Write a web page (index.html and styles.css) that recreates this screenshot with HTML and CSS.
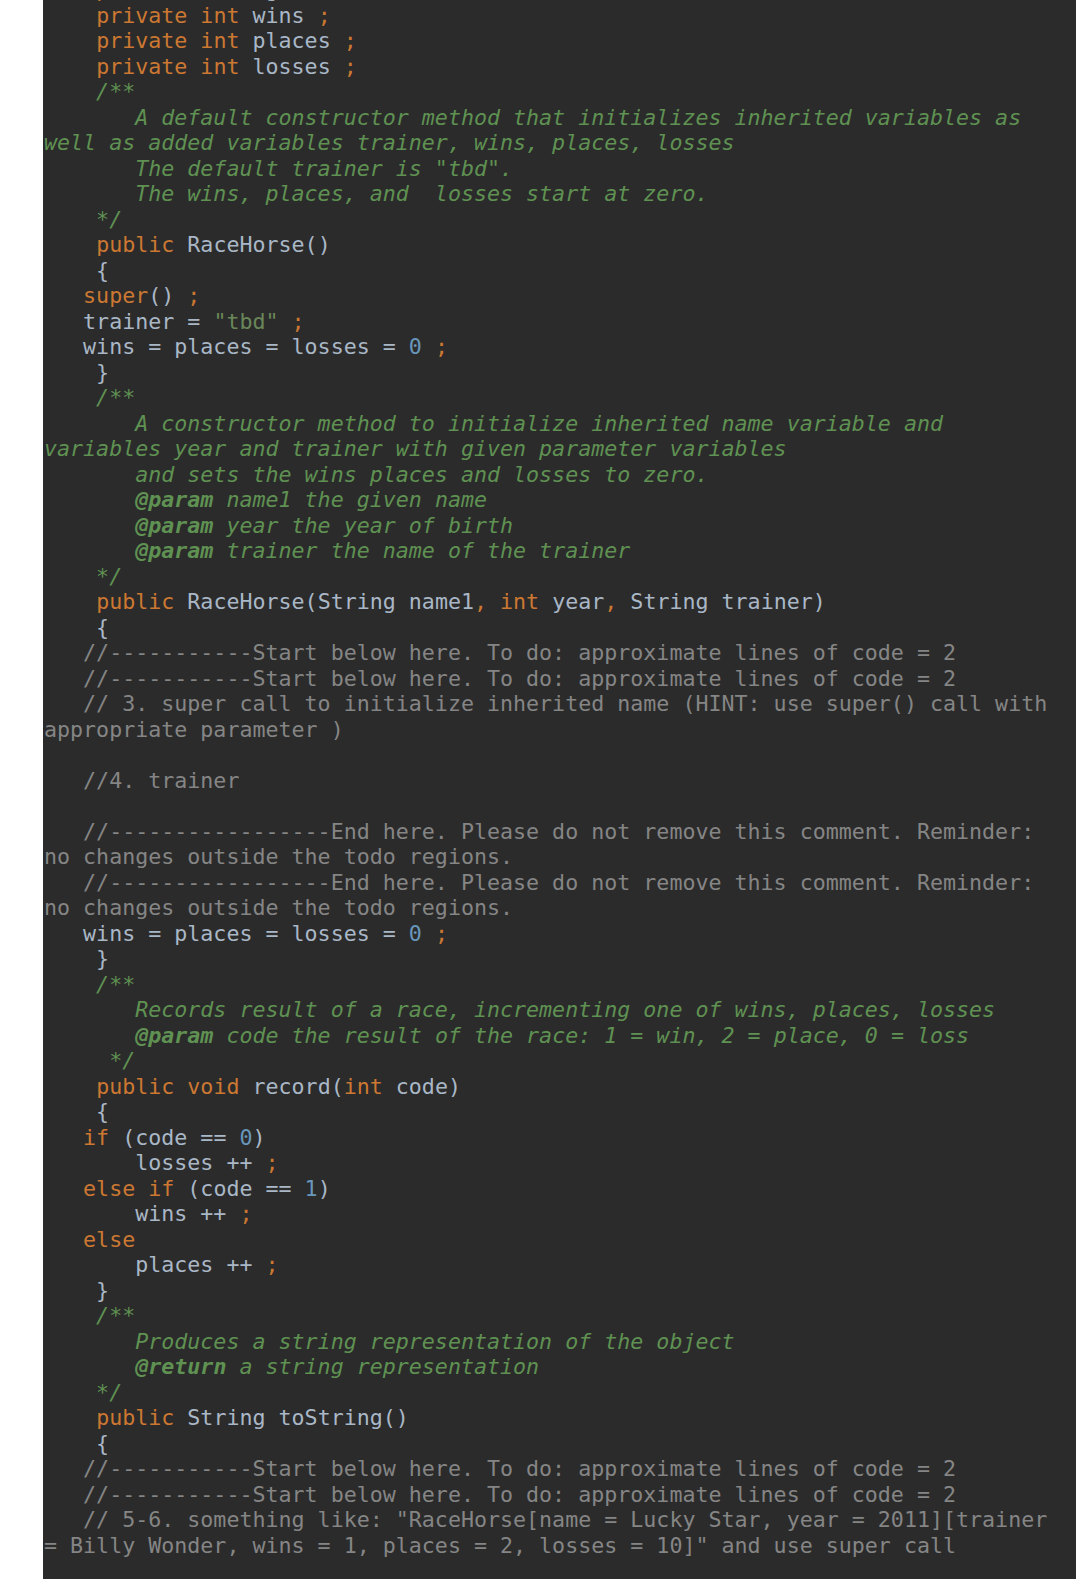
FILE: index.html
```html
<!DOCTYPE html>
<html lang="en">
<head>
<meta charset="utf-8">
<title>RaceHorse.java</title>
<link rel="stylesheet" href="styles.css">
</head>
<body>
<div class="page">
  <div class="margin-left"></div>
  <main class="editor">
    <div class="code">
<div class="ln">    <span class="k">private</span> String trainer <span class="k">;</span></div>
<div class="ln">    <span class="k">private int</span> wins <span class="k">;</span></div>
<div class="ln">    <span class="k">private int</span> places <span class="k">;</span></div>
<div class="ln">    <span class="k">private int</span> losses <span class="k">;</span></div>
<div class="ln d">    /**</div>
<div class="ln d">       A default constructor method that initializes inherited variables as</div>
<div class="ln d">well as added variables trainer, wins, places, losses</div>
<div class="ln d">       The default trainer is "tbd".</div>
<div class="ln d">       The wins, places, and  losses start at zero.</div>
<div class="ln d">    */</div>
<div class="ln">    <span class="k">public</span> RaceHorse()</div>
<div class="ln">    {</div>
<div class="ln">   <span class="k">super</span>() <span class="k">;</span></div>
<div class="ln">   trainer = <span class="str">"tbd"</span> <span class="k">;</span></div>
<div class="ln">   wins = places = losses = <span class="n">0</span> <span class="k">;</span></div>
<div class="ln">    }</div>
<div class="ln d">    /**</div>
<div class="ln d">       A constructor method to initialize inherited name variable and</div>
<div class="ln d">variables year and trainer with given parameter variables</div>
<div class="ln d">       and sets the wins places and losses to zero.</div>
<div class="ln d">       <span class="t">@param</span> name1 the given name</div>
<div class="ln d">       <span class="t">@param</span> year the year of birth</div>
<div class="ln d">       <span class="t">@param</span> trainer the name of the trainer</div>
<div class="ln d">    */</div>
<div class="ln">    <span class="k">public</span> RaceHorse(String name1<span class="k">, int</span> year<span class="k">,</span> String trainer)</div>
<div class="ln">    {</div>
<div class="ln c">   //-----------Start below here. To do: approximate lines of code = 2</div>
<div class="ln c">   //-----------Start below here. To do: approximate lines of code = 2</div>
<div class="ln c">   // 3. super call to initialize inherited name (HINT: use super() call with</div>
<div class="ln c">appropriate parameter )</div>
<div class="ln c"> </div>
<div class="ln c">   //4. trainer</div>
<div class="ln c"> </div>
<div class="ln c">   //-----------------End here. Please do not remove this comment. Reminder:</div>
<div class="ln c">no changes outside the todo regions.</div>
<div class="ln c">   //-----------------End here. Please do not remove this comment. Reminder:</div>
<div class="ln c">no changes outside the todo regions.</div>
<div class="ln">   wins = places = losses = <span class="n">0</span> <span class="k">;</span></div>
<div class="ln">    }</div>
<div class="ln d">    /**</div>
<div class="ln d">       Records result of a race, incrementing one of wins, places, losses</div>
<div class="ln d">       <span class="t">@param</span> code the result of the race: 1 = win, 2 = place, 0 = loss</div>
<div class="ln d">     */</div>
<div class="ln">    <span class="k">public void</span> record(<span class="k">int</span> code)</div>
<div class="ln">    {</div>
<div class="ln">   <span class="k">if</span> (code == <span class="n">0</span>)</div>
<div class="ln">       losses ++ <span class="k">;</span></div>
<div class="ln">   <span class="k">else if</span> (code == <span class="n">1</span>)</div>
<div class="ln">       wins ++ <span class="k">;</span></div>
<div class="ln">   <span class="k">else</span></div>
<div class="ln">       places ++ <span class="k">;</span></div>
<div class="ln">    }</div>
<div class="ln d">    /**</div>
<div class="ln d">       Produces a string representation of the object</div>
<div class="ln d">       <span class="t">@return</span> a string representation</div>
<div class="ln d">    */</div>
<div class="ln">    <span class="k">public</span> String toString()</div>
<div class="ln">    {</div>
<div class="ln c">   //-----------Start below here. To do: approximate lines of code = 2</div>
<div class="ln c">   //-----------Start below here. To do: approximate lines of code = 2</div>
<div class="ln c">   // 5-6. something like: "RaceHorse[name = Lucky Star, year = 2011][trainer</div>
<div class="ln c">= Billy Wonder, wins = 1, places = 2, losses = 10]" and use super call</div>
    </div>
  </main>
</div>
</body>
</html>
```

FILE: styles.css
```css
html, body {
  margin: 0;
  padding: 0;
  background: #ffffff;
}

body {
  height: 1579px;
  overflow: hidden;
}

.page {
  display: flex;
  height: 1579px;
}

.margin-left {
  width: 43px;
  flex: none;
  background: #ffffff;
}

.editor {
  flex: 1;
  margin-right: 4px;
  background: #2b2b2b;
  overflow: hidden;
}

.code {
  margin-top: -23px;
  padding-left: 1px;
  font-family: "DejaVu Sans Mono", "Liberation Mono", monospace;
  font-size: 21.65px;
  line-height: 25.5px;
  color: #a9b7c6;
}

.ln {
  white-space: pre;
  height: 25.5px;
}

.k {
  color: #cc7832;
}

.n {
  color: #6897bb;
}

.str {
  color: #6a8759;
}

.c {
  color: #858585;
}

.d {
  color: #5f9152;
  font-style: italic;
}

.t {
  font-weight: bold;
}
```
